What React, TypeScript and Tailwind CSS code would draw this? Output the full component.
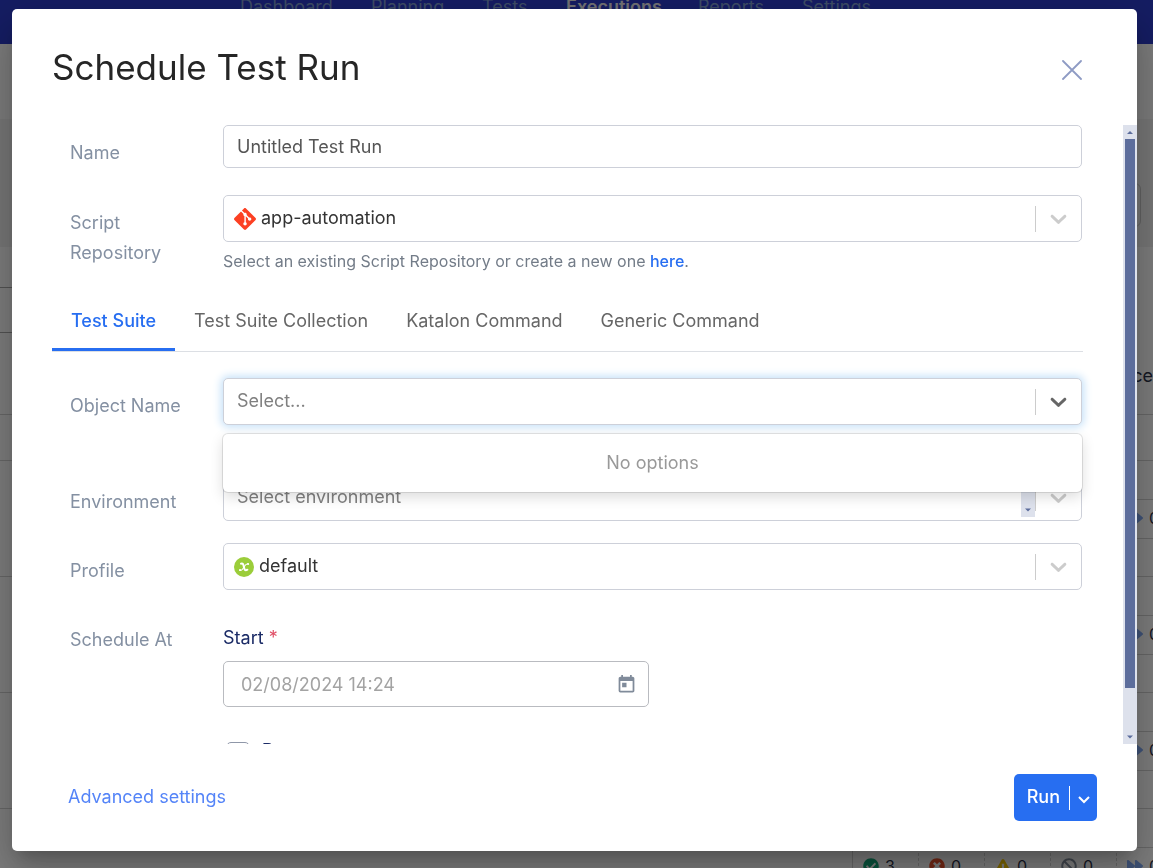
import { useState, type ReactNode } from 'react'
import { FaCheckCircle, FaTimesCircle, FaExclamationTriangle, FaBan, FaForward } from 'react-icons/fa'
import { MdToday } from 'react-icons/md'
import { SiGit } from 'react-icons/si'
import { clsx } from 'clsx'

const NAV_ITEMS = [
  { label: 'Dashboard', width: 'w-[131px]' },
  { label: 'Planning', width: 'w-[111px]' },
  { label: 'Tests', width: 'w-[84px]' },
  { label: 'Executions', width: 'w-[132px]' },
  { label: 'Reports', width: 'w-[104px]' },
  { label: 'Settings', width: 'w-[100px]' },
]

const TABS = ['Test Suite', 'Test Suite Collection', 'Katalon Command', 'Generic Command']

const RESULTS = [
  { key: 'passed', icon: <FaCheckCircle className="text-[#12a87a]" />, count: 3 },
  { key: 'failed', icon: <FaTimesCircle className="text-[#e8502a]" />, count: 0 },
  { key: 'error', icon: <FaExclamationTriangle className="text-[#f5c800]" />, count: 0 },
  { key: 'incomplete', icon: <FaBan className="text-[#808b9a]" />, count: 0 },
  { key: 'skipped', icon: <FaForward className="text-[#7ea6f0]" />, count: 0 },
]

function ExecutionRow() {
  return (
    <div className="flex border-b border-[#cfcfcf]">
      <div className="flex-1" />
      <div className="w-[301px] shrink-0 overflow-hidden border-l border-[#cfcfcf]">
        <div className="h-[39px] border-b border-[#cfcfcf]" />
        <div className="flex h-[39px] border-b border-[#cfcfcf]">
          {RESULTS.map(r => (
            <div
              key={r.key}
              className="flex w-[66px] shrink-0 items-center gap-1.5 border-r border-dashed border-[#cfcfcf] pb-0.5 pl-2.5 text-base text-[#2b3148]"
            >
              {r.icon}
              <span>{r.count}</span>
            </div>
          ))}
        </div>
        <div className="h-[37px]" />
      </div>
    </div>
  )
}

function ExecutionsPage() {
  return (
    <div className="h-screen overflow-hidden bg-[#fafafa]" aria-hidden="true">
      <nav className="flex h-11 bg-[#2a3ac6] pl-60 text-lg leading-3.5 text-[#7b98cc]">
        {NAV_ITEMS.map(item => (
          <span
            key={item.label}
            className={clsx('shrink-0', item.width, item.label === 'Executions' && 'font-semibold text-[#e4e4e8]')}
          >
            {item.label}
          </span>
        ))}
      </nav>
      <div className="h-[75px] bg-[#f8f8f8]" />
      <div className="flex h-32 items-end bg-[#eeeeee] px-3 pb-5">
        <div className="h-11 flex-1 rounded-md border border-[#c4c4c4]" />
      </div>
      <div className="mr-40">
        <div className="h-[41px] border-b border-[#a6a6a6]" />
        <div className="h-[45px] border-b border-[#a6a6a6]" />
      </div>
      <div className="flex h-[82px] items-center justify-end border-b border-[#cfcfcf] pt-1 text-lg text-[#2b3148]">
        ce
      </div>
      <div className="h-[46px] border-b border-[#cfcfcf]" />
      {[1, 2, 3, 4].map(n => (
        <ExecutionRow key={n} />
      ))}
    </div>
  )
}

function Chevron({ className }: { className?: string }) {
  return (
    <svg viewBox="0 0 20 20" className={clsx('size-[27px] fill-current', className)} aria-hidden="true">
      <path d="M4.516 7.548c0.436-0.446 1.043-0.481 1.576 0l3.908 3.747 3.908-3.747c0.533-0.481 1.141-0.446 1.574 0 0.436 0.445 0.408 1.197 0 1.615-0.406 0.418-4.695 4.502-4.695 4.502-0.217 0.223-0.502 0.335-0.787 0.335s-0.57-0.112-0.789-0.335c0 0-4.287-4.084-4.695-4.502s-0.436-1.17 0-1.615z" />
    </svg>
  )
}

function ProfileIcon() {
  return (
    <svg viewBox="0 0 20 20" className="ml-2.5 size-5 shrink-0" aria-hidden="true">
      <circle cx="10" cy="10" r="10" fill="#9bcd3a" />
      <g fill="none" stroke="#fff" strokeLinecap="round">
        <path d="M7 6.700C9 6 9.400 7.500 9.900 10s1 4.200 3.500 2.700" strokeWidth="2" />
        <path d="M14.200 6.900C12.300 6.300 11 8.300 10 10.100s-2.500 4.200-4.300 3.200" strokeWidth="1.100" />
        <path d="M14 7.100h.1M6 13h.1" strokeWidth="2" />
      </g>
    </svg>
  )
}

function FormRow({ label, htmlFor, children }: { label: string; htmlFor: string; children: ReactNode }) {
  return (
    <div className="flex">
      <label htmlFor={htmlFor} className="w-[171px] shrink-0 pt-[13px] pr-8 pl-[18px] text-lg leading-[30px] text-[#8490a2]">
        {label}
      </label>
      <div className="min-w-0 flex-1">{children}</div>
    </div>
  )
}

interface SelectBoxProps {
  id: string
  value: string
  icon?: ReactNode
  placeholder?: boolean
  focused?: boolean
  extra?: ReactNode
}

function SelectBox({ id, value, icon, placeholder, focused, extra }: SelectBoxProps) {
  return (
    <div
      className={clsx(
        'flex h-[47px] items-center rounded-[5px] border border-[#cdd0d9] bg-white',
        focused && 'shadow-[0_0_8px_2px_#c4e0f8]'
      )}
    >
      {icon}
      <select
        id={id}
        defaultValue={value}
        className={clsx(
          'h-full min-w-0 flex-1 appearance-none bg-transparent pb-px text-lg outline-none',
          icon ? 'pl-[5px]' : 'pl-[13px]',
          placeholder ? 'text-[#808080]' : 'text-[#333333]'
        )}
      >
        <option>{value}</option>
      </select>
      {extra}
      <span className="h-[26px] w-px bg-[#cccccc]" />
      <span className="flex w-[45px] justify-center">
        <Chevron className={focused ? 'text-[#666666]' : 'text-[#cccccc]'} />
      </span>
    </div>
  )
}

function Scrollbar() {
  return (
    <div className="flex w-3.5 shrink-0 flex-col items-center bg-[#dde1ec]" aria-hidden="true">
      <svg viewBox="0 0 14 14" className="size-3.5 fill-[#5c6d9c]">
        <path d="M4 9L7 6l3 3z" />
      </svg>
      <div className="w-2.5 flex-[549] bg-[#5c6d9c]" />
      <div className="flex-[42]" />
      <svg viewBox="0 0 14 14" className="size-3.5 fill-[#5c6d9c]">
        <path d="M4 5.500L7 8.500l3-3z" />
      </svg>
    </div>
  )
}

export default function App() {
  const [tab, setTab] = useState('Test Suite')
  const [name, setName] = useState('Untitled Test Run')
  const [start, setStart] = useState('02/08/2024 14:24')

  return (
    <div className="font-[Inter,sans-serif]">
      <ExecutionsPage />

      <div className="fixed inset-0 flex bg-black/50 pt-[9px] pr-4 pb-[17px] pl-3">
        <div
          role="dialog"
          aria-labelledby="dialog-title"
          className="flex min-w-0 flex-1 flex-col rounded-[5px] bg-white shadow-[0_11px_15px_-7px_rgba(0,0,0,0.2),0_24px_38px_3px_rgba(0,0,0,0.14),0_9px_46px_8px_rgba(0,0,0,0.12)]"
        >
          {/* Header */}
          <div className="flex items-start justify-between px-10 pt-9 pb-[30px]">
            <h2 id="dialog-title" className="text-[35px] leading-11 text-[#262626]">
              Schedule Test Run
            </h2>
            <button aria-label="Close" className="flex size-[50px] items-center justify-center">
              <svg viewBox="0 0 20 20" className="size-5 text-[#8e9bc4]">
                <path d="M1 1l18 18M19 1L1 19" fill="none" stroke="currentColor" strokeWidth="1.800" strokeLinecap="round" />
              </svg>
            </button>
          </div>

          {/* Body */}
          <div className="flex min-h-0 flex-1">
            <div className="min-w-0 flex-1 overflow-hidden pr-10 pl-10">
              <div className="pr-px">
                <FormRow label="Name" htmlFor="name">
                  <input
                    id="name"
                    value={name}
                    onChange={e => setName(e.target.value)}
                    className="block h-[43px] w-full rounded-[5px] border border-[#cdd0d9] px-[13px] text-lg text-[#555555] outline-none"
                  />
                </FormRow>
                <div className="mt-[27px]">
                  <FormRow label="Script Repository" htmlFor="repository">
                    <SelectBox
                      id="repository"
                      value="app-automation"
                      icon={<SiGit className="ml-2.5 size-[22px] shrink-0 text-[#fc4023]" />}
                    />
                    <p className="mt-[5px] text-base leading-7 text-[#737c88]">
                      Select an existing Script Repository or create a new one{' '}
                      <a href="#repositories" className="font-medium text-[#276ef1]">
                        here
                      </a>
                      .
                    </p>
                  </FormRow>
                </div>
              </div>

              {/* Tabs */}
              <div role="tablist" className="mt-4 flex border-b border-[#dcdfe4]">
                {TABS.map(t => (
                  <button
                    key={t}
                    role="tab"
                    aria-selected={tab === t}
                    onClick={() => setTab(t)}
                    className={clsx(
                      'h-[60px] border-b-3 px-[19px] pt-0.5 text-lg',
                      tab === t ? 'border-[#276ef1] font-medium text-[#276ef1]' : 'border-transparent text-[#666666]'
                    )}
                  >
                    {t}
                  </button>
                ))}
              </div>

              <div className="pt-[26px] pr-px">
                <FormRow label="Object Name" htmlFor="object">
                  <div className="relative">
                    <SelectBox id="object" value="Select..." placeholder focused />
                    <div className="absolute inset-x-0 top-14 z-10 rounded-[5px] bg-white py-3.5 text-center text-lg leading-[30px] text-[#999999] shadow-[0_0_0_1px_rgba(0,0,0,0.1),0_5px_14px_rgba(0,0,0,0.14)]">
                      No options
                    </div>
                  </div>
                </FormRow>
                <div className="mt-[49px] flex flex-col gap-[22px]">
                  <FormRow label="Environment" htmlFor="environment">
                    <SelectBox
                      id="environment"
                      value="Select environment"
                      placeholder
                      extra={
                        <span className="mb-0.5 flex h-10 w-3.5 items-end bg-[#dde1ec]">
                          <svg viewBox="0 0 14 14" className="size-3.5 fill-[#5c6d9c]" aria-hidden="true">
                            <path d="M4 5.500L7 8.500l3-3z" />
                          </svg>
                        </span>
                      }
                    />
                  </FormRow>
                  <FormRow label="Profile" htmlFor="profile">
                    <SelectBox id="profile" value="default" icon={<ProfileIcon />} />
                  </FormRow>
                  <FormRow label="Schedule At" htmlFor="start">
                    <label htmlFor="start" className="block pt-[11px] text-lg leading-[30px] text-[#1b2b66]">
                      Start <span className="text-[#e04f66]">*</span>
                    </label>
                    <div className="mt-2 flex h-[46px] w-[426px] items-center rounded-[5px] border border-[#b9bbc0] pr-[11px]">
                      <input
                        id="start"
                        value={start}
                        onChange={e => setStart(e.target.value)}
                        className="h-full min-w-0 flex-1 bg-transparent pl-[17px] text-lg text-[#a3a3a3] outline-none"
                      />
                      <button aria-label="Choose date" className="text-[#808b9a]">
                        <MdToday className="size-[21px]" />
                      </button>
                    </div>
                    <div className="mt-[35px] flex items-start gap-3 pl-[3px]">
                      <input
                        id="repeat"
                        type="checkbox"
                        className="size-6 appearance-none rounded-[5px] border border-[#8f97a8]"
                      />
                      <label htmlFor="repeat" className="text-lg leading-[18px] font-medium text-[#1b2b66]">
                        Repeat
                      </label>
                    </div>
                  </FormRow>
                </div>
              </div>
            </div>
            <Scrollbar />
          </div>

          {/* Footer */}
          <div className="flex items-center justify-between py-[30px] pr-10 pl-14">
            <a href="#advanced" className="pb-0.5 text-lg text-[#5484f8]">
              Advanced settings
            </a>
            <div className="flex h-[47px] items-center rounded-[5px] bg-[#276ef1] text-white">
              <button className="h-full pr-[9px] pb-0.5 pl-[13px] text-lg font-medium">Run</button>
              <span className="h-6 w-px bg-white" />
              <button aria-label="More run options" className="flex h-full w-[27px] items-center justify-center">
                <svg viewBox="0 0 12 8" className="mt-1 h-2 w-3">
                  <path d="M1 1l5 5 5-5" fill="none" stroke="currentColor" strokeWidth="2" />
                </svg>
              </button>
            </div>
          </div>
        </div>
      </div>
    </div>
  )
}
